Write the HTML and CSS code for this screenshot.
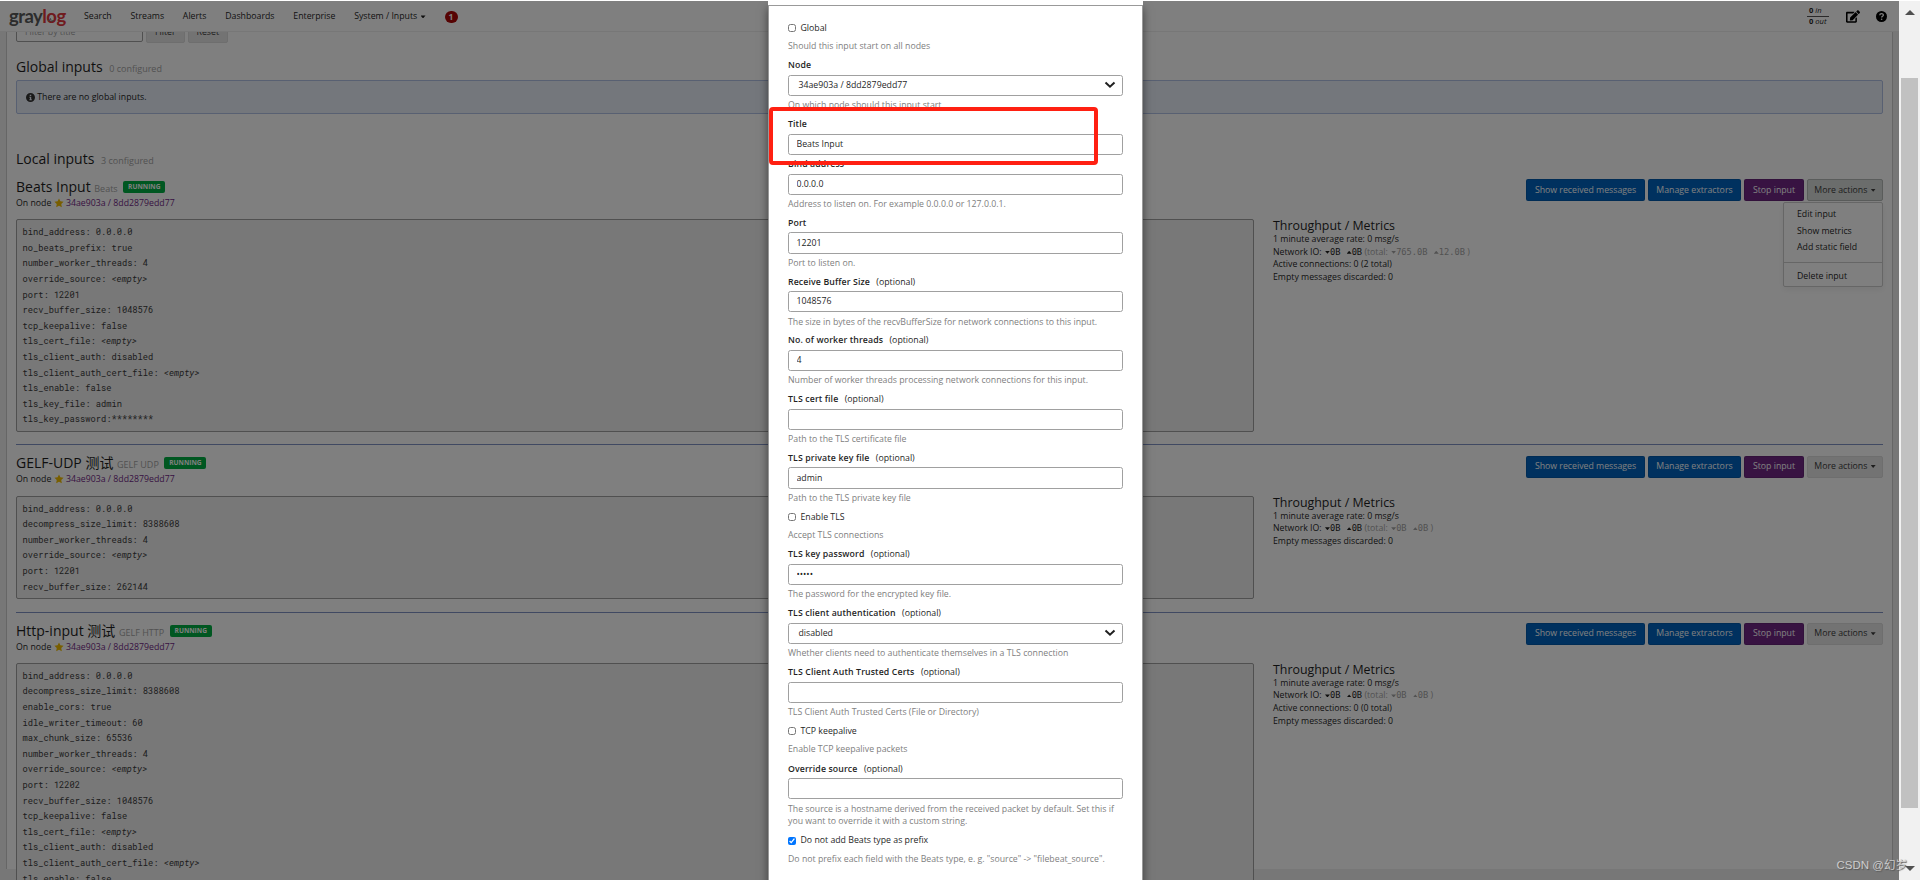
FILE: index.html
```html
<!DOCTYPE html>
<html lang="en">
<head>
    <meta charset="UTF-8">
    <meta name="viewport" content="width=device-width, initial-scale=1.0">
    <title>Graylog - Inputs</title>
    <link rel="stylesheet" href="styles.css">
</head>
<body>
<svg class="sprite" aria-hidden="true">
    <symbol id="star" viewBox="0 0 24 24"><path d="M12 1l3.4 7 7.6 1-5.6 5.3 1.4 7.7-6.8-3.7L5.200 22l1.400-7.700L1 9l7.600-1z"/></symbol>
    <symbol id="info" viewBox="0 0 16 16"><path fill-rule="evenodd" d="M8 0a8 8 0 1 0 0 16A8 8 0 0 0 8 0zM6.700 3h2.600v2.400H6.700zM6 6.700h3.300v4.600h1V13H6v-1.700h1V8.400H6z"/></symbol>
</svg>

<div class="screen">
    <div class="app">
        <nav class="navbar">
            <a class="brand"><span>gray</span><span class="brand-log">l<span class="brand-o">o<svg viewBox="0 0 8 8"><path d="M1 4.500h1.500l1-2 1 3.500 1-1.500H7"/></svg></span>g</span></a>
            <ul class="nav-links">
                <li>Search</li>
                <li>Streams</li>
                <li>Alerts</li>
                <li>Dashboards</li>
                <li>Enterprise</li>
                <li>System / Inputs <i class="caret"></i></li>
            </ul>
            <span class="notification">1</span>
            <div class="nav-right">
                <div class="throughput">
                    <div class="throughput-in"><b>0</b> <i>in</i></div>
                    <div><b>0</b> <i>out</i></div>
                </div>
                <svg class="icon-edit" viewBox="0 0 576 512"><path d="M402.600 83.200l90.200 90.200c3.800 3.800 3.800 10 0 13.800L274.400 405.600l-92.800 10.300c-12.400 1.400-22.900-9.100-21.500-21.500l10.300-92.800L388.800 83.200c3.800-3.800 10-3.800 13.800 0zm162-22.900l-48.800-48.800c-15.200-15.200-39.900-15.200-55.200 0l-35.400 35.400c-3.800 3.800-3.800 10 0 13.800l90.200 90.200c3.800 3.800 10 3.800 13.800 0l35.400-35.400c15.200-15.300 15.200-40 0-55.200zM384 346.200V448H64V128h229.800c3.200 0 6.200-1.300 8.500-3.500l40-40c7.600-7.600 2.200-20.500-8.500-20.500H48C21.500 64 0 85.500 0 112v352c0 26.500 21.500 48 48 48h352c26.500 0 48-21.500 48-48V306.200c0-10.700-12.900-16-20.500-8.500l-40 40c-2.200 2.300-3.500 5.300-3.500 8.500z"/></svg>
                <svg class="icon-help" viewBox="0 0 16 16"><circle cx="8" cy="8" r="8"/><path d="M5.500 6.200C5.500 3 10.800 3 10.700 6.100 10.600 7.700 8.200 7.900 8.200 9.600" fill="none" stroke="#fff" stroke-width="1.900"/><circle cx="8.200" cy="12" r="1.200" fill="#fff"/></svg>
            </div>
        </nav>

        <div class="content">
            <div class="filter-row">
                <input class="filter-input" type="text" placeholder="Filter by title">
                <button class="btn btn-default">Filter</button>
                <button class="btn btn-default">Reset</button>
            </div>

            <h2 class="global-title">Global inputs <small>0 configured</small></h2>
            <div class="alert"><svg class="icon-info"><use href="#info"/></svg> There are no global inputs.</div>
            <h2 class="local-title">Local inputs <small>3 configured</small></h2>

            <section class="input-item">
                <div class="input-head">
                    <div>
                        <h2>Beats Input <small>Beats</small> <span class="label">RUNNING</span></h2>
                        <div class="node">On node <svg class="star"><use href="#star"/></svg> <a>34ae903a / 8dd2879edd77</a></div>
                    </div>
                    <div class="actions">
                        <button class="btn btn-primary b-show">Show received messages</button>
                        <button class="btn btn-primary b-manage">Manage extractors</button>
                        <button class="btn btn-info b-stop">Stop input</button>
                        <button class="btn btn-default b-more active">More actions <i class="caret"></i></button>
                        <ul class="dropdown">
                            <li>Edit input</li>
                            <li>Show metrics</li>
                            <li>Add static field</li>
                            <li class="divider"></li>
                            <li>Delete input</li>
                        </ul>
                    </div>
                </div>
                <div class="input-body">
<pre class="config">bind_address: 0.0.0.0
no_beats_prefix: true
number_worker_threads: 4
override_source: <i>&lt;empty&gt;</i>
port: 12201
recv_buffer_size: 1048576
tcp_keepalive: false
tls_cert_file: <i>&lt;empty&gt;</i>
tls_client_auth: disabled
tls_client_auth_cert_file: <i>&lt;empty&gt;</i>
tls_enable: false
tls_key_file: admin
tls_key_password:********</pre>
                    <div class="metrics">
                        <h3>Throughput / Metrics</h3>
                        <div>1 minute average rate: 0 msg/s</div>
                        <div>Network IO: <span class="io"><i class="caret"></i>0B <i class="caret up"></i>0B</span> <span class="total">(total: <span class="io"><i class="caret"></i>765.0B <i class="caret up"></i>12.0B</span> )</span></div>
                        <div>Active connections: 0 (2 total)</div>
                        <div>Empty messages discarded: 0</div>
                    </div>
                </div>
            </section>

            <section class="input-item">
                <div class="input-head">
                    <div>
                        <h2>GELF-UDP 测试 <small>GELF UDP</small> <span class="label">RUNNING</span></h2>
                        <div class="node">On node <svg class="star"><use href="#star"/></svg> <a>34ae903a / 8dd2879edd77</a></div>
                    </div>
                    <div class="actions">
                        <button class="btn btn-primary b-show">Show received messages</button>
                        <button class="btn btn-primary b-manage">Manage extractors</button>
                        <button class="btn btn-info b-stop">Stop input</button>
                        <button class="btn btn-default b-more">More actions <i class="caret"></i></button>
                    </div>
                </div>
                <div class="input-body">
<pre class="config">bind_address: 0.0.0.0
decompress_size_limit: 8388608
number_worker_threads: 4
override_source: <i>&lt;empty&gt;</i>
port: 12201
recv_buffer_size: 262144</pre>
                    <div class="metrics">
                        <h3>Throughput / Metrics</h3>
                        <div>1 minute average rate: 0 msg/s</div>
                        <div>Network IO: <span class="io"><i class="caret"></i>0B <i class="caret up"></i>0B</span> <span class="total">(total: <span class="io"><i class="caret"></i>0B <i class="caret up"></i>0B</span> )</span></div>
                        <div>Empty messages discarded: 0</div>
                    </div>
                </div>
            </section>

            <section class="input-item">
                <div class="input-head">
                    <div>
                        <h2>Http-input 测试 <small>GELF HTTP</small> <span class="label">RUNNING</span></h2>
                        <div class="node">On node <svg class="star"><use href="#star"/></svg> <a>34ae903a / 8dd2879edd77</a></div>
                    </div>
                    <div class="actions">
                        <button class="btn btn-primary b-show">Show received messages</button>
                        <button class="btn btn-primary b-manage">Manage extractors</button>
                        <button class="btn btn-info b-stop">Stop input</button>
                        <button class="btn btn-default b-more">More actions <i class="caret"></i></button>
                    </div>
                </div>
                <div class="input-body">
<pre class="config">bind_address: 0.0.0.0
decompress_size_limit: 8388608
enable_cors: true
idle_writer_timeout: 60
max_chunk_size: 65536
number_worker_threads: 4
override_source: <i>&lt;empty&gt;</i>
port: 12202
recv_buffer_size: 1048576
tcp_keepalive: false
tls_cert_file: <i>&lt;empty&gt;</i>
tls_client_auth: disabled
tls_client_auth_cert_file: <i>&lt;empty&gt;</i>
tls_enable: false</pre>
                    <div class="metrics">
                        <h3>Throughput / Metrics</h3>
                        <div>1 minute average rate: 0 msg/s</div>
                        <div>Network IO: <span class="io"><i class="caret"></i>0B <i class="caret up"></i>0B</span> <span class="total">(total: <span class="io"><i class="caret"></i>0B <i class="caret up"></i>0B</span> )</span></div>
                        <div>Active connections: 0 (0 total)</div>
                        <div>Empty messages discarded: 0</div>
                    </div>
                </div>
            </section>
        </div>
    </div>

    <div class="scrollbar">
        <i class="arrow arrow-up"></i>
        <div class="thumb"></div>
        <i class="arrow arrow-down"></i>
    </div>

    <div class="backdrop">
        <form class="modal">
            <div class="check"><label><input type="checkbox"> Global</label><p>Should this input start on all nodes</p></div>
            <div class="field">
                <label>Node</label>
                <div class="control select">34ae903a / 8dd2879edd77 <svg viewBox="0 0 12 8"><path d="M1.500 1.500L6 5.700l4.500-4.200"/></svg></div>
                <p>On which node should this input start</p>
            </div>
            <div class="field">
                <label>Title</label>
                <input class="control" type="text" value="Beats Input">
            </div>
            <div class="field">
                <label>Bind address</label>
                <input class="control" type="text" value="0.0.0.0">
                <p>Address to listen on. For example 0.0.0.0 or 127.0.0.1.</p>
            </div>
            <div class="field">
                <label>Port</label>
                <input class="control" type="text" value="12201">
                <p>Port to listen on.</p>
            </div>
            <div class="field">
                <label>Receive Buffer Size <small>(optional)</small></label>
                <input class="control" type="text" value="1048576">
                <p>The size in bytes of the recvBufferSize for network connections to this input.</p>
            </div>
            <div class="field">
                <label>No. of worker threads <small>(optional)</small></label>
                <input class="control" type="text" value="4">
                <p>Number of worker threads processing network connections for this input.</p>
            </div>
            <div class="field">
                <label>TLS cert file <small>(optional)</small></label>
                <input class="control" type="text">
                <p>Path to the TLS certificate file</p>
            </div>
            <div class="field">
                <label>TLS private key file <small>(optional)</small></label>
                <input class="control" type="text" value="admin">
                <p>Path to the TLS private key file</p>
            </div>
            <div class="check"><label><input type="checkbox"> Enable TLS</label><p>Accept TLS connections</p></div>
            <div class="field">
                <label>TLS key password <small>(optional)</small></label>
                <input class="control password" type="text" value="•••••">
                <p>The password for the encrypted key file.</p>
            </div>
            <div class="field">
                <label>TLS client authentication <small>(optional)</small></label>
                <div class="control select">disabled <svg viewBox="0 0 12 8"><path d="M1.500 1.500L6 5.700l4.500-4.200"/></svg></div>
                <p>Whether clients need to authenticate themselves in a TLS connection</p>
            </div>
            <div class="field">
                <label>TLS Client Auth Trusted Certs <small>(optional)</small></label>
                <input class="control" type="text">
                <p>TLS Client Auth Trusted Certs (File or Directory)</p>
            </div>
            <div class="check"><label><input type="checkbox"> TCP keepalive</label><p>Enable TCP keepalive packets</p></div>
            <div class="field">
                <label>Override source <small>(optional)</small></label>
                <input class="control" type="text">
                <p>The source is a hostname derived from the received packet by default. Set this if<br>you want to override it with a custom string.</p>
            </div>
            <div class="check"><label><input type="checkbox" checked> Do not add Beats type as prefix</label><p>Do not prefix each field with the Beats type, e. g. "source" -&gt; "filebeat_source".</p></div>
        </form>
    </div>

    <div class="highlight"></div>
    <div class="watermark">CSDN @幻岁</div>
</div>
</body>
</html>
```
FILE: styles.css
```css
:root {
    --text: #1f1f1f;
    --muted: #a4a4a4;
    --border: #a0a0a0;
    --primary: #0063be;
    --info: #702785;
    --success: #00ae42;
}

* {
    box-sizing: border-box;
}

body {
    margin: 0;
    background: #fff;
    color: var(--text);
    font-family: "Open Sans", "Noto Sans CJK SC", sans-serif;
    font-size: 8.75px;
    line-height: 12.5px;
    overflow: hidden;
}

h2, h3, p, ul, pre {
    margin: 0;
    padding: 0;
    font-weight: 400;
}

ul {
    list-style: none;
}

input, button {
    font: inherit;
    color: inherit;
}

.sprite {
    position: absolute;
    width: 0;
    height: 0;
}

.screen {
    position: relative;
    display: flex;
    width: 1920px;
    height: 880px;
    padding-top: 1px;
    overflow: hidden;
}

.app {
    width: 1899px;
    height: 879px;
    background: #eee;
    overflow: hidden;
}

/* Navbar */
.navbar {
    position: relative;
    z-index: 1;
    display: flex;
    align-items: center;
    height: 31px;
    padding: 0 26px 0 9px;
    background: #fff;
    border-bottom: 1px solid #eee;
}

.brand {
    width: 75px;
    font-family: Lato, sans-serif;
    font-size: 18.5px;
    font-weight: 700;
    line-height: 28px;
    letter-spacing: -0.55px;
    color: #5a5a5a;
}

.brand-log {
    color: #e0363c;
}

.brand-o {
    position: relative;
}

.brand-o svg {
    position: absolute;
    left: 1px;
    bottom: 3px;
    width: 8px;
    height: 8px;
    fill: none;
    stroke: #777;
    stroke-width: 0.9;
}

.nav-links {
    display: flex;
    gap: 18.8px;
    padding-top: 1px;
}

.caret {
    display: inline-block;
    width: 5px;
    height: 3px;
    margin-left: 1px;
    background: currentColor;
    clip-path: polygon(0 0, 100% 0, 50% 100%);
    vertical-align: middle;
}

.caret.up {
    clip-path: polygon(0 100%, 100% 100%, 50% 0);
}

.notification {
    width: 13px;
    height: 12px;
    margin: 2px 0 0 19px;
    border-radius: 6px;
    background: #ad0707;
    color: #fff;
    font-size: 8.5px;
    font-weight: 700;
    line-height: 11px;
    text-align: center;
}

.nav-right {
    display: flex;
    align-items: center;
    margin-left: auto;
    margin-right: -14px;
}

.throughput {
    width: 22px;
    margin-right: 17px;
    padding-left: 2px;
    font-size: 7.6px;
    line-height: 9.5px;
    white-space: nowrap;
}

.throughput-in {
    margin-left: -2px;
    padding-left: 2px;
    border-bottom: 1px solid #555;
}

.icon-edit {
    width: 14px;
    height: 13px;
    margin-right: 16px;
}

.icon-help {
    width: 11px;
    height: 11px;
}

/* Page content */
.content {
    height: 848px;
    margin: 0 6px;
    padding: 0 9px;
    background: #fff;
    border: solid #ccc;
    border-width: 0 1px;
}

.filter-row {
    display: flex;
    gap: 3px;
    height: 22px;
    margin-top: -11px;
}

.filter-input {
    width: 127px;
    height: 21px;
    padding: 0 8px;
    border: 1px solid var(--border);
    border-radius: 2px;
}

.filter-input::placeholder {
    color: var(--muted);
}

.filter-row .btn {
    padding: 0 8px;
}

.content h2 {
    height: 18px;
    font-size: 14px;
    line-height: 18px;
}

.content h2 small {
    font-size: 9px;
    color: var(--muted);
}

.global-title small, .local-title small {
    margin-left: 3px;
}

.global-title {
    margin-top: 15px;
}

.alert {
    height: 34px;
    margin-top: 4px;
    padding: 10px 9px;
    background: #e8eef9;
    border: 1px solid #b0c0e4;
    border-radius: 2px;
}

.icon-info {
    width: 9px;
    height: 9px;
    fill: #333;
    vertical-align: -1.5px;
}

.local-title {
    margin-top: 36px;
}

.input-item {
    padding-bottom: 12.4px;
    border-bottom: 1px solid #8093c4;
}

.local-title + .input-item {
    margin-top: 0.9px;
}

.input-head {
    display: flex;
    justify-content: space-between;
    height: 50.3px;
    padding-top: 9.1px;
}

.content .input-head h2 {
    white-space: nowrap;
}

.label {
    display: inline-block;
    width: 42px;
    height: 12px;
    margin-left: 2px;
    border-radius: 2px;
    background: var(--success);
    color: #fff;
    font-size: 6.6px;
    font-weight: 700;
    line-height: 11px;
    text-align: center;
    vertical-align: 3px;
}

.star {
    width: 10px;
    height: 10px;
    fill: #f0bd00;
    vertical-align: -2px;
}

.node {
    height: 13px;
    margin-top: 1px;
    line-height: 13px;
}

.node a {
    color: var(--info);
}

.actions {
    position: relative;
    display: flex;
    gap: 3px;
    padding-top: 1.3px;
}

.btn {
    height: 22px;
    padding: 0 0 1px;
    border: 1px solid rgba(0, 0, 0, 0.1);
    border-radius: 2px;
    white-space: nowrap;
}

.btn-default {
    background: #e6e6e6;
    border-color: #dcdcdc;
    color: #3c3c3c;
}

.btn-default.active {
    background: #d6dad8;
    border-color: #b4b8b6;
}

.btn-primary {
    background: var(--primary);
    color: #fff;
}

.btn-info {
    background: var(--info);
    color: #fff;
}

.b-show {
    width: 119px;
}

.b-manage {
    width: 93px;
}

.b-stop {
    width: 60px;
}

.b-more {
    width: 76px;
}

.dropdown {
    position: absolute;
    top: 24.3px;
    right: 0;
    width: 100px;
    height: 85px;
    padding-top: 3px;
    background: #fff;
    border: 1px solid #ccc;
    border-radius: 2px;
    box-shadow: 0 3px 6px rgba(0, 0, 0, 0.06);
}

.dropdown li {
    padding-left: 13px;
    line-height: 16.5px;
}

.dropdown .divider {
    height: 1px;
    margin: 6px 0 5px;
    background: #ccc;
}

.input-body {
    display: flex;
    gap: 19px;
}

.config {
    width: 1238px;
    padding: 4px 5.5px;
    background: #f0f0f0;
    border: 1px solid var(--border);
    border-radius: 2px;
    color: #3c3c3c;
    font-family: "Roboto Mono", "DejaVu Sans Mono", monospace;
    font-size: 8.72px;
    line-height: 15.6px;
}

.metrics h3 {
    font-size: 12.4px;
    line-height: 14px;
}

.metrics {
    line-height: 12.6px;
}

.metrics > div {
    height: 12.6px;
}

.io {
    font-family: "DejaVu Sans Mono", monospace;
    font-size: 8.7px;
    line-height: 10px;
}

.total {
    color: var(--muted);
}

/* Browser scrollbar */
.scrollbar {
    display: flex;
    flex-direction: column;
    align-items: center;
    width: 21px;
    padding: 9px 0 9px;
    background: #f1f1f1;
}

.thumb {
    width: 17px;
    height: 730px;
    margin: 63px 0 auto;
    background: #c1c1c1;
}

.arrow {
    border: 5px solid transparent;
}

.arrow-up {
    border-top: 0;
    border-bottom-color: #505050;
}

.arrow-down {
    border-bottom: 0;
    border-top-color: #505050;
}

/* Modal */
.backdrop {
    position: absolute;
    top: 1px;
    left: 0;
    z-index: 2;
    width: 1899px;
    height: 879px;
    background: rgba(0, 0, 0, 0.5);
    overflow: hidden;
}

.modal {
    width: 375px;
    height: 900px;
    margin: 4px 0 0 768px;
    padding: 15.5px 19px;
    background: #fff;
    border: 1px solid #999;
    box-shadow: 0 -4px 0 #fff, 0 3px 9px rgba(0, 0, 0, 0.5);
}

.field {
    display: flex;
    flex-direction: column;
    gap: 3.14px;
    padding-bottom: 3.14px;
}

.field p {
    padding-bottom: 3.14px;
}

.modal p {
    color: #808080;
    white-space: nowrap;
}

.field label {
    font-weight: 600;
    letter-spacing: 0.12px;
}

.field small {
    margin-left: 4px;
    font-size: 8.75px;
    font-weight: 400;
    letter-spacing: 0;
}

.control {
    display: flex;
    align-items: center;
    width: 335px;
    height: 21.25px;
    padding: 0 7.5px 1px;
    border: 1px solid var(--border);
    border-radius: 2.5px;
    background: #fff;
}

.select {
    justify-content: space-between;
    padding: 0 6px 1px 9.5px;
}

.select svg {
    width: 12px;
    height: 8px;
    fill: none;
    stroke: #1f1f1f;
    stroke-width: 2;
}

.check label {
    display: flex;
    align-items: center;
    gap: 4.5px;
}

.check input {
    width: 8px;
    height: 8px;
    margin: 1px 0 0;
}

.check p {
    padding: 6.25px 0 6.6px;
}

/* Marker over the title field */
.highlight {
    position: absolute;
    top: 107px;
    left: 769px;
    z-index: 3;
    width: 329px;
    height: 58px;
    border: 4px solid #ff2012;
    border-radius: 4px;
}

.watermark {
    position: absolute;
    right: 13px;
    bottom: 6px;
    z-index: 3;
    color: #ccc;
    font-family: "Liberation Sans", "Noto Sans CJK SC", sans-serif;
    font-size: 11.5px;
    line-height: 18px;
    text-shadow: 1px 1px 1px #555;
    white-space: nowrap;
}
```
